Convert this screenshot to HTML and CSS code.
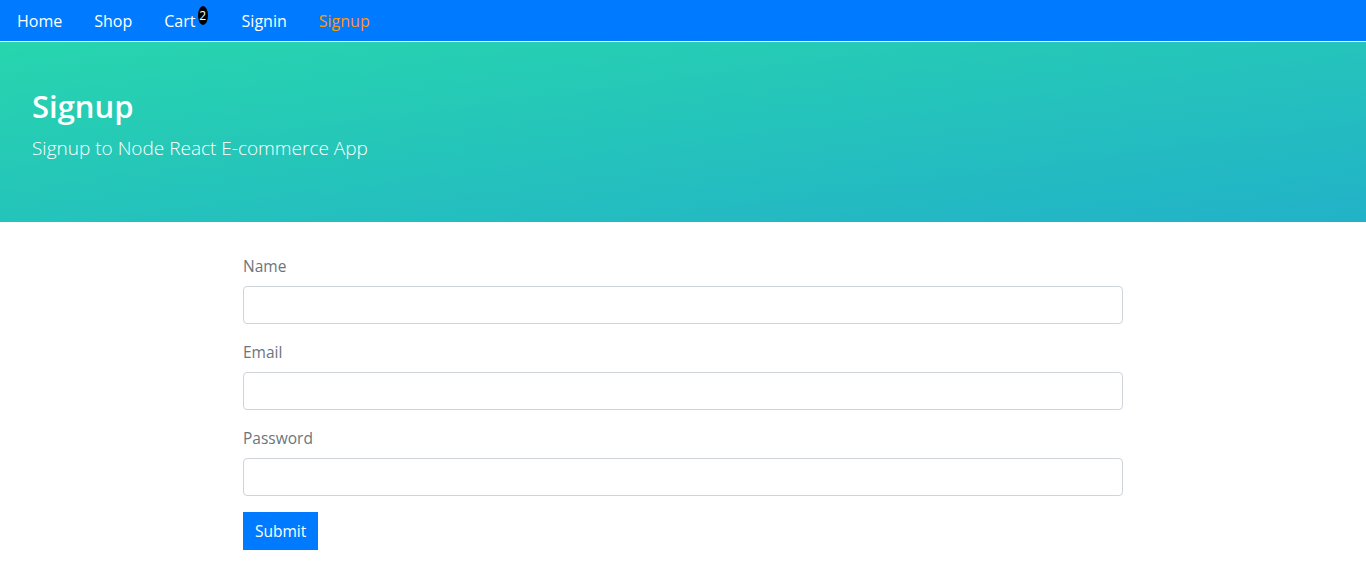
FILE: index.html
```html
<!DOCTYPE html>
<html>
<head>
  <title>Signup</title>
  <link rel="stylesheet" href="styles.css">
</head>
<body>

<nav class="navbar">
  <ul class="nav-list">
    <li><a class="nav-link" href="#">Home</a></li>
    <li><a class="nav-link" href="#">Shop</a></li>
    <li><a class="nav-link" href="#">Cart <sup class="badge">2</sup></a></li>
    <li><a class="nav-link" href="#">Signin</a></li>
    <li><a class="nav-link active" href="#">Signup</a></li>
  </ul>
</nav>

<div class="jumbotron">
  <h2>Signup</h2>
  <p class="lead">Signup to Node React E-commerce App</p>
</div>

<div class="form-wrap">
  <form>
    <div class="form-group">
      <label>Name</label>
      <input type="text" class="form-control">
    </div>
    <div class="form-group">
      <label>Email</label>
      <input type="email" class="form-control">
    </div>
    <div class="form-group">
      <label>Password</label>
      <input type="password" class="form-control">
    </div>
    <button type="button" class="btn-submit">Submit</button>
  </form>
</div>

</body>
</html>
```

FILE: styles.css
```css
* {
  box-sizing: border-box;
}

body {
  margin: 0;
  font-family: "Open Sans", "Noto Sans", Arial, sans-serif;
  font-size: 16px;
  line-height: 1.5;
  color: #212529;
  background-color: #fff;
}

.navbar {
  background-color: #007bff;
  border-bottom: 1px solid #fff;
}

.nav-list {
  display: flex;
  list-style: none;
  margin: 0;
  padding: 0 1px;
}

.nav-link {
  display: block;
  padding: 9px 16px 8px;
  color: #fff;
  line-height: 24px;
  text-decoration: none;
}

.nav-link.active {
  color: #ff9900;
}

.badge {
  display: inline-block;
  font-size: 12px;
  line-height: 19px;
  width: 10px;
  text-align: center;
  background-color: #000;
  color: #fff;
  border-radius: 50%;
  vertical-align: top;
  position: relative;
  top: -3px;
  margin-left: -2px;
  margin-right: 2px;
}

.jumbotron {
  height: 180px;
  padding: 46px 32px;
  margin-bottom: 32px;
  color: #fff;
  background: linear-gradient(to right bottom, #27d5ae, #22b2c8);
}

.jumbotron h2 {
  margin: 0 0 9px;
  font-size: 31px;
  font-weight: 600;
  line-height: 1.2;
}

.lead {
  margin: 0;
  font-size: 19px;
  font-weight: 300;
}

.form-wrap {
  width: 880px;
  margin: 0 auto;
}

.form-group {
  margin-bottom: 16px;
}

.form-group label {
  display: inline-block;
  margin-bottom: 8px;
  font-size: 15.5px;
  line-height: 24px;
  color: #6c757d;
}

.form-control {
  display: block;
  width: 100%;
  height: 38px;
  padding: 6px 12px;
  font-size: 16px;
  border: 1px solid #ced4da;
  border-radius: 4px;
}

.btn-submit {
  height: 38px;
  padding: 0 12px;
  font-family: inherit;
  font-size: 15.5px;
  color: #fff;
  background-color: #007bff;
  border: none;
  border-radius: 0;
}
```
